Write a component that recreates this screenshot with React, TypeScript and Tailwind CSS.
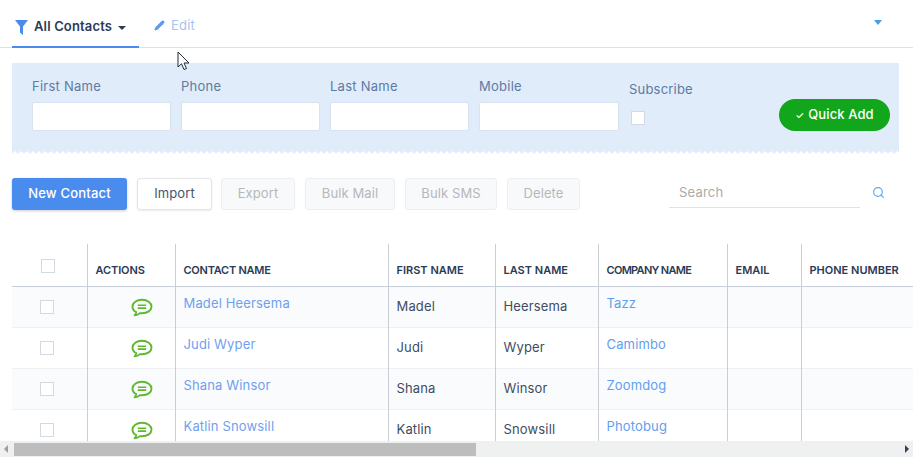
import React from 'react';
import { Pencil, Search } from 'lucide-react';

const font = { fontFamily: '"Inter", "Liberation Sans", sans-serif' };

const fields = [
  { label: 'First Name', width: 'w-[139px]' },
  { label: 'Phone', width: 'w-[139px]' },
  { label: 'Last Name', width: 'w-[139px]' },
  { label: 'Mobile', width: 'w-[140px]' },
];

const contacts = [
  { name: 'Madel Heersema', first: 'Madel', last: 'Heersema', company: 'Tazz' },
  { name: 'Judi Wyper', first: 'Judi', last: 'Wyper', company: 'Camimbo' },
  { name: 'Shana Winsor', first: 'Shana', last: 'Winsor', company: 'Zoomdog' },
  { name: 'Katlin Snowsill', first: 'Katlin', last: 'Snowsill', company: 'Photobug' },
];

const headers = [
  { label: 'ACTIONS', width: 'w-[88px] tracking-[-0.1px]' },
  { label: 'CONTACT NAME', width: 'w-[213px] tracking-[-0.25px]' },
  { label: 'FIRST NAME', width: 'w-[107px] tracking-normal' },
  { label: 'LAST NAME', width: 'w-[103px] tracking-normal' },
  { label: 'COMPANY NAME', width: 'w-[129px] tracking-[-0.7px]' },
  { label: 'EMAIL', width: 'w-[74px] tracking-normal' },
  { label: 'PHONE NUMBER', width: 'w-[200px] tracking-normal' },
];

const ChatIcon = () => (
  <svg width="22" height="20" viewBox="0 0 22 20" fill="none">
    <path
      d="M11 1.800c-5.400 0-9.500 3-9.500 6.900 0 2.300 1.400 4.200 3.700 5.400-.1 1.100-.6 2.200-1.600 3.300 2-.2 3.800-1 5.300-2.300.7.1 1.400.2 2.100.2 5.400 0 9.500-3 9.500-6.600 0-3.900-4.100-6.900-9.500-6.900Z"
      stroke="#5fb82d"
      strokeWidth="1.900"
      strokeLinejoin="round"
    />
    <path d="M6.800 7.300h8.400M6.800 10.100h8.400" stroke="#5fb82d" strokeWidth="1.600" />
  </svg>
);

const CheckBox = ({ className }: { className: string }) => (
  <div className={`w-[14px] h-[14px] bg-white border border-[#d3d9e3] ${className}`}></div>
);

const ToolbarButton = ({ label, width }: { label: string; width: string }) => (
  <button className={`${width} h-8 rounded-[3px] border border-[#eceef1] bg-[#f8f9fa] text-[13px] tracking-[0.1px] text-[#b4b8bd]`}>
    {label}
  </button>
);

export default function App() {
  return (
    <div style={font} className="relative flex flex-col h-[457px] w-[913px] overflow-hidden bg-white">
      <div className="flex h-12 shrink-0 items-stretch border-b border-[#dfe1e3] pl-3 pr-[31px]">
        <div className="flex w-[127px] items-center gap-[6px] border-b-2 border-[#4a8cee] -mb-px pl-[3px] pt-2">
          <svg width="13" height="15" viewBox="0 0 13 15">
            <path d="M0 0h13L8 6.500V15L5 12.500V6.500Z" fill="#4a8cee" />
          </svg>
          <span className="text-[13px] font-semibold tracking-[0.15px] text-[#2b3a55]">All Contacts</span>
          <span className="w-0 h-0 border-x-4 border-x-transparent border-t-4 border-t-[#2b3a55] mt-[2px]"></span>
        </div>
        <div className="flex items-center gap-[6px] ml-[15px] pt-[4px] text-[13px] tracking-[0.2px] text-[#a9c3ef]">
          <Pencil size={11} fill="#5f9bea" stroke="#5f9bea" />
          Edit
        </div>
        <span className="ml-auto mt-[20px] w-0 h-0 border-x-[4px] border-x-transparent border-t-[5px] border-t-[#4a9be0]"></span>
      </div>

      <div className="relative mx-3 mt-[15px] flex h-[91px] w-[887px] shrink-0 bg-[#e1ecfa] pl-5">
        <div className="flex gap-[10px] pt-[14px]">
          {fields.map((f) => (
            <div key={f.label} className="flex flex-col">
              <label className="text-[13px] leading-[18px] text-[#5c7ba3] tracking-[0.25px]">{f.label}</label>
              <input className={`${f.width} mt-[7px] h-[29px] rounded-[2px] border border-[#d8e2f0] bg-white`} />
            </div>
          ))}
        </div>
        <div className="ml-[10px] flex flex-col pt-[17px]">
          <span className="text-[13px] leading-[18px] text-[#5c7ba3] tracking-[0.2px]">Subscribe</span>
          <CheckBox className="mt-[13px] ml-[2px]" />
        </div>
        <button className="absolute right-[9px] top-[36px] flex h-8 w-[111px] items-center justify-center gap-1 rounded-full bg-[#11a61c] text-[13px] font-medium tracking-[0.1px] text-white">
          <span className="text-[10px]">✓</span> Quick Add
        </button>
        <svg className="absolute left-0 bottom-0 h-[3px] w-full" preserveAspectRatio="none">
          <defs>
            <pattern id="zig" width="6" height="3" patternUnits="userSpaceOnUse">
              <path d="M0 3 L3 0 L6 3 Z" fill="#ffffff" />
            </pattern>
          </defs>
          <rect width="100%" height="3" fill="url(#zig)" />
        </svg>
      </div>

      <div className="mt-[24px] flex h-8 shrink-0 items-center pl-3">
        <button className="h-8 w-[115px] rounded-[3px] bg-[#4a8cee] text-[13px] font-medium tracking-[0.2px] text-white shadow-[0_1px_3px_rgba(0,0,0,0.2)]">
          New Contact
        </button>
        <button className="ml-[10px] h-8 w-[75px] rounded-[3px] border border-[#e3e5e8] bg-white text-[13px] tracking-[0.1px] text-[#44546f] shadow-[0_1px_2px_rgba(0,0,0,0.08)]">
          Import
        </button>
        <div className="ml-[9px] flex gap-[10px]">
          <ToolbarButton label="Export" width="w-[74px]" />
          <ToolbarButton label="Bulk Mail" width="w-[90px]" />
          <ToolbarButton label="Bulk SMS" width="w-[92px]" />
          <ToolbarButton label="Delete" width="w-[73px]" />
        </div>
        <div className="ml-[89px] flex h-[30px] w-[191px] items-center self-start border-b border-[#dbe3f0] pl-[10px] text-[13px] tracking-[0.2px] text-[#b0a9a4]">
          Search
        </div>
        <Search size={13} strokeWidth={2.200} className="ml-[12px] mb-[4px] text-[#5fa8ee]" />
      </div>

      <div className="mt-[34px] min-h-0 flex-1 overflow-hidden pl-3">
        <table className="w-[989px] table-fixed border-collapse text-[13px] tracking-[0.15px] text-[#3f4d63]">
          <thead>
            <tr className="h-[42px] border-b border-[#c8cfdb]">
              <th className="w-[75px] p-0 align-top">
                <CheckBox className="ml-[29px] mt-[15px]" />
              </th>
              {headers.map((h) => (
                <th
                  key={h.label}
                  className={`${h.width} border-l border-[#c8cdd6] px-2 pt-[11px] text-left text-[11px] font-semibold text-[#2b3a55]`}
                >
                  {h.label}
                </th>
              ))}
            </tr>
          </thead>
          <tbody>
            {contacts.map((c, i) => (
              <tr key={c.name} className={`h-[41px] border-b border-[#eef0f4] ${i % 2 === 0 ? 'bg-[#fafbfd]' : 'bg-white'}`}>
                <td className="p-0">
                  <CheckBox className="ml-[28px]" />
                </td>
                <td className="border-l border-[#c8cdd6] p-0">
                  <div className="ml-[43px] mt-[3px] w-[22px]">
                    <ChatIcon />
                  </div>
                </td>
                <td className="border-l border-[#c8cdd6] px-2 pb-[5px] text-[#6f9fee]">{c.name}</td>
                <td className="border-l border-[#c8cdd6] px-2">{c.first}</td>
                <td className="border-l border-[#c8cdd6] px-2">{c.last}</td>
                <td className="border-l border-[#c8cdd6] px-2 pb-[5px] text-[#5fa0ee]">{c.company}</td>
                <td className="border-l border-[#c8cdd6]"></td>
                <td className="border-l border-[#c8cdd6]"></td>
              </tr>
            ))}
          </tbody>
        </table>
      </div>

      <div className="flex h-4 shrink-0 items-center bg-[#eff0f0]">
        <span className="ml-1 w-0 h-0 border-y-[4px] border-y-transparent border-r-[4px] border-r-[#a99a94]"></span>
        <div className="ml-[6px] h-[13px] w-[462px] bg-[#bdbdbd]"></div>
        <span className="ml-auto mr-1 w-0 h-0 border-y-[4px] border-y-transparent border-l-[4px] border-l-[#3f3a55]"></span>
      </div>

      <svg className="absolute left-[177px] top-[51px]" width="14" height="20" viewBox="0 0 14 20">
        <path d="M1 1v15l3.500-3.200 2.500 5.700 2.500-1-2.500-5.500h5Z" fill="#fff" stroke="#1f2937" strokeWidth="1" />
      </svg>
    </div>
  );
}
